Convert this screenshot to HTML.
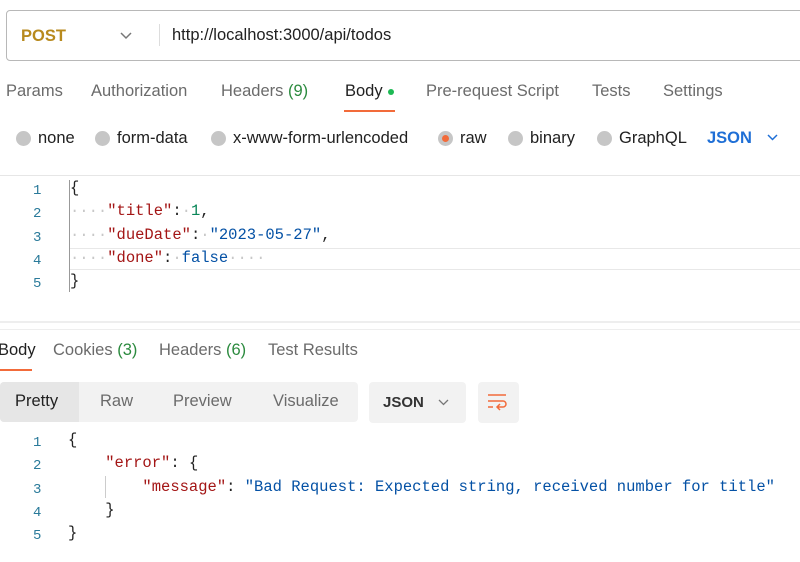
<!DOCTYPE html>
<html><head><style>
body{margin:0;width:800px;height:562px;background:#fff;position:relative;overflow:hidden;font-family:"Liberation Sans",sans-serif;color:#212121}
.a{position:absolute;white-space:pre}
.t{font-size:16.5px;color:#6b6b6b}
.m{font-family:"Liberation Mono",monospace;font-size:15.5px}
.ln{color:#2a7a9a;font-family:"Liberation Mono",monospace;font-size:14px}
.k{color:#a31515}.s{color:#0451a5}.n{color:#098658}.d{color:#c8c8c8}
.r{position:absolute;width:15px;height:15px;border-radius:50%;background:#c6c6c6}
</style></head><body>
<div class="a" style="left:6px;top:10px;width:800px;height:49px;border:1px solid #b8b8b8;border-radius:4px"></div>
<div class="a" style="left:21px;top:27px;font-size:16.5px;font-weight:bold;color:#b88a1e">POST</div>
<svg class="a" style="left:120px;top:32px" width="12" height="8"><path d="M1 1l5 5 5-5" fill="none" stroke="#777" stroke-width="1.5"/></svg>
<div class="a" style="left:159px;top:24px;width:1px;height:22px;background:#ddd"></div>
<div class="a" style="left:172px;top:26px;font-size:16.5px;color:#212121">http://localhost:3000/api/todos</div>

<div class="a t" style="left:6px;top:82px">Params</div>
<div class="a t" style="left:91px;top:82px">Authorization</div>
<div class="a t" style="left:221px;top:82px">Headers <span style="color:#2b8a3e">(9)</span></div>
<div class="a t" style="left:345px;top:82px;color:#212121">Body</div>
<div class="a" style="left:388px;top:89px;width:6px;height:6px;border-radius:50%;background:#1db954"></div>
<div class="a" style="left:344px;top:110px;width:51px;height:2px;background:#f26b3a"></div>
<div class="a t" style="left:426px;top:82px">Pre-request Script</div>
<div class="a t" style="left:592px;top:82px">Tests</div>
<div class="a t" style="left:663px;top:82px">Settings</div>

<div class="r" style="left:16px;top:131px"></div><div class="a t" style="left:38px;top:129px;color:#212121">none</div>
<div class="r" style="left:95px;top:131px"></div><div class="a t" style="left:117px;top:129px;color:#212121">form-data</div>
<div class="r" style="left:211px;top:131px"></div><div class="a t" style="left:233px;top:129px;color:#212121">x-www-form-urlencoded</div>
<div class="r" style="left:438px;top:131px"></div><div class="a" style="left:442px;top:135px;width:7px;height:7px;border-radius:50%;background:#f26b3a"></div><div class="a t" style="left:460px;top:129px;color:#212121">raw</div>
<div class="r" style="left:508px;top:131px"></div><div class="a t" style="left:530px;top:129px;color:#212121">binary</div>
<div class="r" style="left:597px;top:131px"></div><div class="a t" style="left:619px;top:129px;color:#212121">GraphQL</div>
<div class="a" style="left:707px;top:129px;font-size:16.5px;font-weight:bold;color:#1f6fd6">JSON</div>
<svg class="a" style="left:767px;top:134px" width="11" height="7"><path d="M1 1l4.5 4.5 4.5-4.5" fill="none" stroke="#1f6fd6" stroke-width="1.5"/></svg>

<div class="a" style="left:0;top:175px;width:800px;height:1px;background:#e6e6e6"></div>
<div class="a" style="left:69px;top:180px;width:1px;height:112px;background:#999"></div>
<div class="a" style="left:70px;top:248px;width:730px;height:20px;border:1px solid #e8e8e8;border-left:none"></div>
<div class="a ln" style="left:33px;top:180px;line-height:23.3px">1<br>2<br>3<br>4<br>5</div>
<div class="a m" style="left:70px;top:177px;line-height:23.3px">{
<span class="d">····</span><span class="k">"title"</span>:<span class="d">·</span><span class="n">1</span>,
<span class="d">····</span><span class="k">"dueDate"</span>:<span class="d">·</span><span class="s">"2023-05-27"</span>,
<span class="d">····</span><span class="k">"done"</span>:<span class="d">·</span><span class="s">false</span><span class="d">····</span>
}</div>

<div class="a" style="left:0;top:321px;width:800px;height:2px;background:#eee"></div>
<div class="a" style="left:0;top:329px;width:800px;height:1px;background:#eee"></div>
<div class="a t" style="left:-2px;top:341px;color:#212121">Body</div>
<div class="a" style="left:0;top:369px;width:32px;height:2px;background:#f26b3a"></div>
<div class="a t" style="left:53px;top:341px">Cookies <span style="color:#2b8a3e">(3)</span></div>
<div class="a t" style="left:159px;top:341px">Headers <span style="color:#2b8a3e">(6)</span></div>
<div class="a t" style="left:268px;top:341px">Test Results</div>

<div class="a" style="left:0;top:382px;width:358px;height:40px;background:#f2f2f2;border-radius:4px"></div>
<div class="a" style="left:0;top:382px;width:79px;height:40px;background:#e6e6e6;border-radius:4px 0 0 4px"></div>
<div class="a t" style="left:15px;top:392px;color:#212121">Pretty</div>
<div class="a t" style="left:100px;top:392px">Raw</div>
<div class="a t" style="left:173px;top:392px">Preview</div>
<div class="a t" style="left:273px;top:392px">Visualize</div>
<div class="a" style="left:369px;top:382px;width:97px;height:41px;background:#f2f2f2;border-radius:4px"></div>
<div class="a" style="left:383px;top:394px;font-size:15px;font-weight:bold;color:#333">JSON</div>
<svg class="a" style="left:438px;top:399px" width="11" height="7"><path d="M1 1l4.5 4.5 4.5-4.5" fill="none" stroke="#777" stroke-width="1.3"/></svg>
<div class="a" style="left:478px;top:382px;width:41px;height:41px;background:#f2f2f2;border-radius:4px"></div>
<svg class="a" style="left:486px;top:393px" width="24" height="20"><path d="M2 2h18M2 8h15a3 3 0 0 1 0 6h-5M14 11l-3 3 3 3M2 14h5" fill="none" stroke="#f26b3a" stroke-width="1.5"/></svg>

<div class="a" style="left:105px;top:476px;width:1px;height:22px;background:#ccc"></div>
<div class="a ln" style="left:33px;top:432px;line-height:23.3px">1<br>2<br>3<br>4<br>5</div>
<div class="a m" style="left:68px;top:429px;line-height:23.3px">{
    <span class="k">"error"</span>: {
        <span class="k">"message"</span>: <span class="s">"Bad Request: Expected string, received number for title"</span>
    }
}</div>
</body></html>
